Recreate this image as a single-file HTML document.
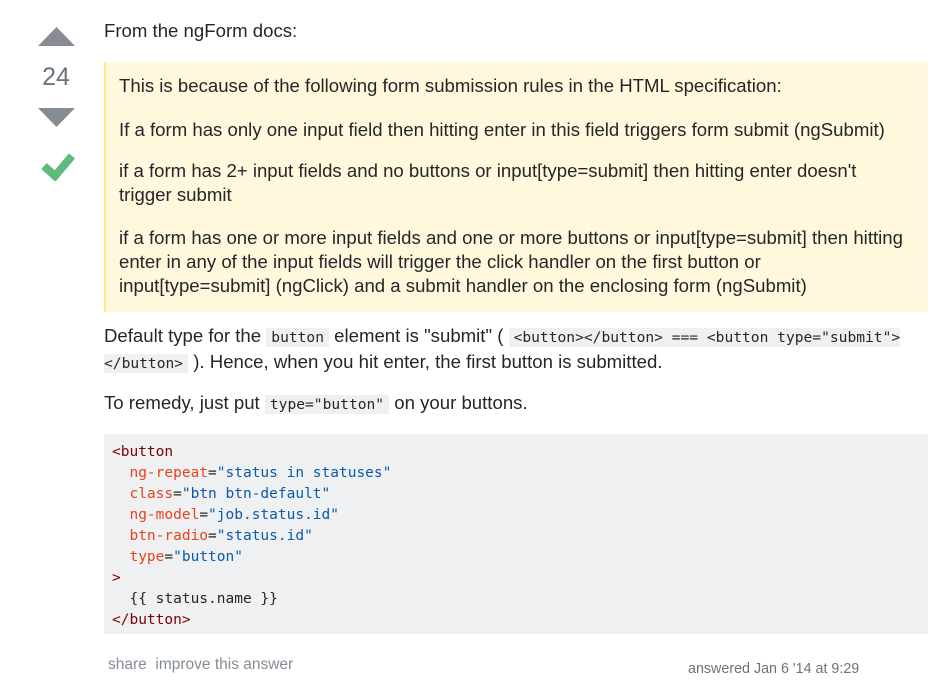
<!DOCTYPE html>
<html><head><meta charset="utf-8"><style>
body{margin:0;background:#fff;width:947px;height:684px;overflow:hidden;font-family:"Liberation Sans",sans-serif;color:#242729;font-size:18.6px}
.p{position:absolute;left:104px;margin:0;line-height:24px}
code{font-family:"DejaVu Sans Mono","Liberation Mono",monospace;font-size:14.6px;background:#eff0f1;padding:1px 5px;color:#242729}
.bq{position:absolute;left:104px;top:62px;width:822px;height:250px;background:#fff8dc;border-left:2px solid #ffeb8e}
.bq p{position:absolute;left:13px;margin:0;line-height:24px;width:800px}
pre{position:absolute;left:104px;top:434px;width:808px;height:184px;margin:0;padding:8px;background:#eff0f1;font-family:"DejaVu Sans Mono","Liberation Mono",monospace;font-size:14.5px;line-height:21px;color:#242729}
.t{color:#800000}.a{color:#e64320}.s{color:#0c5aa8}
</style></head><body>
<svg style="position:absolute;left:38px;top:27px" width="37" height="20"><polygon points="0,19 18.5,0 37,19" fill="#858c93"/></svg>
<div style="position:absolute;left:30px;top:63px;width:52px;text-align:center;font-size:25px;color:#6a737c">24</div>
<svg style="position:absolute;left:38px;top:108px" width="37" height="19"><polygon points="0,0 37,0 18.5,19" fill="#858c93"/></svg>
<svg style="position:absolute;left:41px;top:151px" width="34" height="30"><polyline points="3,15 14,25 31,5" fill="none" stroke="#5eba7d" stroke-width="8"/></svg>
<p class="p" style="top:19px">From the ngForm docs:</p>
<div class="bq">
<p style="top:12px">This is because of the following form submission rules in the HTML specification:</p>
<p style="top:56px">If a form has only one input field then hitting enter in this field triggers form submit (ngSubmit)</p>
<p style="top:97px;width:770px">if a form has 2+ input fields and no buttons or input[type=submit] then hitting enter doesn't trigger submit</p>
<p style="top:164px;width:790px">if a form has one or more input fields and one or more buttons or input[type=submit] then hitting enter in any of the input fields will trigger the click handler on the first button or input[type=submit] (ngClick) and a submit handler on the enclosing form (ngSubmit)</p>
</div>
<p class="p" style="top:324px;width:820px">Default type for the <code>button</code> element is "submit" ( <code>&lt;button&gt;&lt;/button&gt; === &lt;button type="submit"&gt; &lt;/button&gt;</code> ). Hence, when you hit enter, the first button is submitted.</p>
<p class="p" style="top:391px">To remedy, just put <code>type="button"</code> on your buttons.</p>
<pre><span class="t">&lt;button</span>
  <span class="a">ng-repeat</span>=<span class="s">"status in statuses"</span>
  <span class="a">class</span>=<span class="s">"btn btn-default"</span>
  <span class="a">ng-model</span>=<span class="s">"job.status.id"</span>
  <span class="a">btn-radio</span>=<span class="s">"status.id"</span>
  <span class="a">type</span>=<span class="s">"button"</span>
<span class="t">&gt;</span>
  {{ status.name }}
<span class="t">&lt;/button&gt;</span></pre>
<div style="position:absolute;left:108px;top:656px;font-size:15.5px;color:#848d95">share&nbsp;&nbsp;improve this answer</div>
<div style="position:absolute;left:688px;top:661px;font-size:14.3px;color:#6a737c">answered Jan 6 '14 at 9:29</div>
</body></html>
